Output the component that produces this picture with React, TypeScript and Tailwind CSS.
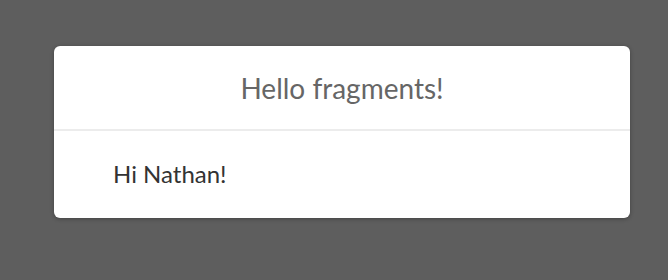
export default function App() {
  return (
    <div className="h-[280px] w-[668px] bg-[#5e5e5e] px-[54px] pt-[46px] font-['Lato',sans-serif]">
      <div className="flex h-[172px] w-[576px] flex-col rounded-[6px] bg-white shadow-[0_1px_4px_rgba(0,0,0,0.3)]">
        <div className="flex h-[85px] items-center justify-center border-b-2 border-[#ececec]">
          <h1 className="text-[28px] leading-none text-[#666666]">Hello fragments!</h1>
        </div>
        <div className="flex flex-1 items-center px-[59px] pb-[2px]">
          <p className="text-[24px] leading-none text-[#333333]">Hi Nathan!</p>
        </div>
      </div>
    </div>
  )
}
